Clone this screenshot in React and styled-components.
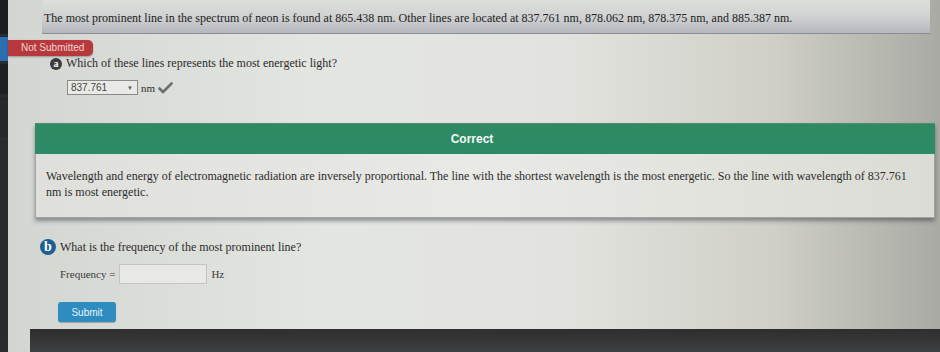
import React from "react";
import styled, { createGlobalStyle } from "styled-components";

const Global = createGlobalStyle`
  html, body { margin: 0; padding: 0; }
  body { width: 940px; height: 352px; overflow: hidden; background: #d9dbd6; }
`;

const Page = styled.div`
  width: 940px;
  height: 352px;
  display: flex;
  background: linear-gradient(90deg, #d3d5d1 0%, #e4e6e2 35%, #e2e3de 60%, #d0d0c8 82%, #a9aaa3 100%);
  font-family: "Liberation Serif", "Times New Roman", serif;
  color: #2a2a2a;
  overflow: hidden;
`;

const Rail = styled.div`
  width: 8px;
  flex: none;
  display: flex;
  flex-direction: column;
  gap: 3px;
  background: #2a2c30;
`;

const RailSeg = styled.div`
  height: ${p => p.$h}px;
  background: ${p => p.$c};
`;

const Main = styled.div`
  flex: 1;
  display: flex;
  flex-direction: column;
  position: relative;
`;

const Header = styled.div`
  margin-left: 34px;
  margin-right: 10px;
  height: 35px;
  box-sizing: border-box;
  padding: 11px 0 0 2px;
  font-size: 12px;
  color: #222;
  background: linear-gradient(180deg, #dcdedb 0%, #d2d4d3 45%, #b6b8bf 100%);
  border-bottom: 1px solid #8b8d96;
`;

const Badge = styled.div`
  position: absolute;
  left: 0;
  top: 40px;
  width: 85px;
  height: 16px;
  box-sizing: border-box;
  padding-left: 13px;
  background: #b8393b;
  border-radius: 0 5px 5px 0;
  color: #f1d4d4;
  font-family: "Liberation Sans", Arial, sans-serif;
  font-size: 10px;
  line-height: 16px;
  box-shadow: 0 1px 2px rgba(0,0,0,0.3);
  z-index: 2;
`;

const PartA = styled.div`
  padding: 22px 0 0 42px;
  display: flex;
  flex-direction: column;
  gap: 9px;
`;

const Question = styled.div`
  display: flex;
  align-items: center;
  gap: 4px;
  font-size: 12px;
  color: #2b2b2b;
`;

const Letter = styled.span`
  width: ${p => p.$size}px;
  height: ${p => p.$size}px;
  border-radius: 50%;
  background: ${p => p.$bg};
  color: #fff;
  display: inline-flex;
  align-items: center;
  justify-content: center;
  font-size: ${p => p.$size - 2}px;
  font-weight: bold;
  line-height: 1;
  flex: none;
`;

const AnswerRow = styled.div`
  display: flex;
  align-items: center;
  padding-left: 17px;
  gap: 3px;
  font-size: 11px;
`;

const Select = styled.div`
  width: 71px;
  height: 15px;
  box-sizing: border-box;
  border: 1px solid #8a8a8a;
  background: #e9eae6;
  display: flex;
  align-items: center;
  justify-content: space-between;
  padding: 0 4px 0 3px;
  font-family: "Liberation Sans", Arial, sans-serif;
  font-size: 10px;
  color: #444;
`;

const Caret = styled.span`
  font-size: 6px;
  color: #555;
`;

const Feedback = styled.div`
  margin: 28px 5px 0 27px;
  display: flex;
  flex-direction: column;
  box-shadow: 0 3px 4px rgba(40,40,60,0.45);
`;

const FeedbackHead = styled.div`
  height: 30px;
  background: linear-gradient(180deg, #2f8a63 0%, #2d8a67 100%);
  color: #f4f8f5;
  font-family: "Liberation Sans", Arial, sans-serif;
  font-weight: bold;
  font-size: 12px;
  display: flex;
  align-items: center;
  justify-content: center;
  padding-right: 26px;
  border-top: 1px solid #4e8f73;
`;

const FeedbackBody = styled.div`
  background: linear-gradient(90deg, #dfe0dc 0%, #e9eae6 50%, #dcdcd6 100%);
  border: 1px solid #a2a49e;
  border-top: none;
  min-height: 64px;
  box-sizing: border-box;
  padding: 14px 12px 0 10px;
  font-size: 12px;
  line-height: 16px;
  color: #2c2c2c;
`;

const PartB = styled.div`
  padding: 21px 0 0 32px;
  display: flex;
  flex-direction: column;
  gap: 9px;
`;

const FieldRow = styled.div`
  display: flex;
  align-items: center;
  gap: 4px;
  padding-left: 20px;
  font-size: 11px;
  color: #3a3a3a;
`;

const Input = styled.div`
  width: 88px;
  height: 20px;
  box-sizing: border-box;
  border: 1px solid #c4c6c2;
  background: #e8e9e5;
`;

const SubmitButton = styled.button`
  margin: 18px 0 0 50px;
  width: 58px;
  height: 20px;
  border: none;
  border-radius: 3px;
  background: #2d8dc0;
  color: #e8f3f8;
  font-family: "Liberation Sans", Arial, sans-serif;
  font-size: 10px;
  padding: 0;
  box-shadow: 0 1px 1px rgba(0,0,0,0.25);
`;

const BottomBar = styled.div`
  margin: 7px 0 0 22px;
  height: 24px;
  background: linear-gradient(180deg, #2e2e2e 0%, #3e3f41 100%);
`;

function Check() {
  return (
    <svg width="15" height="12" viewBox="0 0 15 12">
      <path d="M1.5 6.5 L5 10 L13.5 1.5" fill="none" stroke="#6d6f70" strokeWidth="2.6" strokeLinecap="round" strokeLinejoin="round" />
    </svg>
  );
}

export default function App() {
  return (
    <>
      <Global />
      <Page>
        <Rail>
          <RailSeg $h={34} $c="#1c1d20" />
          <RailSeg $h={24} $c="#2b6fb0" />
          <RailSeg $h={30} $c="#1f2023" />
          <RailSeg $h={40} $c="#26272a" />
          <RailSeg $h={200} $c="#2a2b2e" />
        </Rail>
        <Main>
          <Header>
            The most prominent line in the spectrum of neon is found at 865.438 nm. Other lines are located at 837.761 nm, 878.062 nm, 878.375 nm, and 885.387 nm.
          </Header>
          <Badge>Not Submitted</Badge>
          <PartA>
            <Question>
              <Letter $size={12} $bg="#3b3b3d">a</Letter>
              Which of these lines represents the most energetic light?
            </Question>
            <AnswerRow>
              <Select>
                837.761
                <Caret>▼</Caret>
              </Select>
              nm
              <Check />
            </AnswerRow>
          </PartA>
          <Feedback>
            <FeedbackHead>Correct</FeedbackHead>
            <FeedbackBody>
              Wavelength and energy of electromagnetic radiation are inversely proportional. The line with the shortest wavelength is the most energetic. So the line with wavelength of 837.761 nm is most energetic.
            </FeedbackBody>
          </Feedback>
          <PartB>
            <Question>
              <Letter $size={16} $bg="#1f5f93">b</Letter>
              What is the frequency of the most prominent line?
            </Question>
            <FieldRow>
              Frequency =
              <Input />
              Hz
            </FieldRow>
          </PartB>
          <SubmitButton>Submit</SubmitButton>
          <BottomBar />
        </Main>
      </Page>
    </>
  );
}
